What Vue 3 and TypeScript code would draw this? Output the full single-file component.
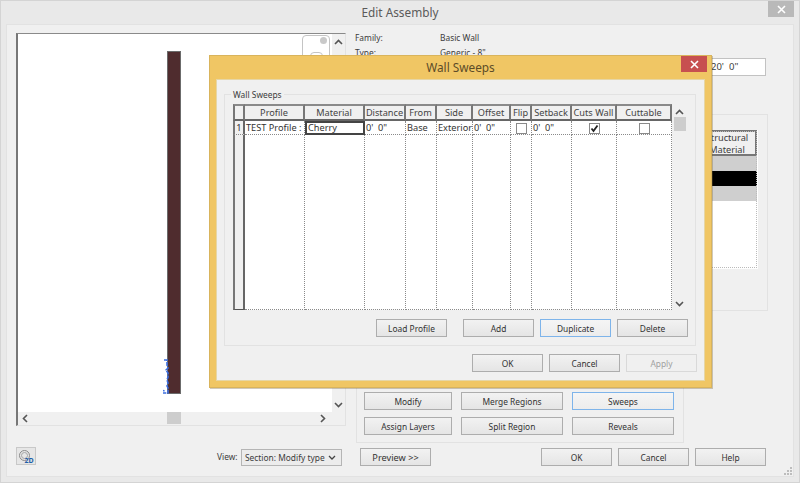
<script setup lang="ts">
interface Col { name: string; width: number; value: string; check?: boolean; checked?: boolean; active?: boolean }
const cols: Col[] = [
  { name: '', width: 12, value: '1' },
  { name: 'Profile', width: 60, value: 'TEST Profile :' },
  { name: 'Material', width: 60, value: 'Cherry', active: true },
  { name: 'Distance', width: 41, value: `0'  0"` },
  { name: 'From', width: 31, value: 'Base' },
  { name: 'Side', width: 36, value: 'Exterior' },
  { name: 'Offset', width: 38, value: `0'  0"` },
  { name: 'Flip', width: 21, value: '', check: true },
  { name: 'Setback', width: 40, value: `0'  0"` },
  { name: 'Cuts Wall', width: 45, value: '', check: true, checked: true },
  { name: 'Cuttable', width: 55, value: '', check: true },
]
</script>

<template>
  <div class="win">
    <header class="title">
      <span>Edit Assembly</span>
      <button class="close grey" type="button">
        <svg width="9" height="9" viewBox="0 0 9 9"><path d="M1 1l7 7M8 1L1 8" stroke="#fff" stroke-width="1.6" /></svg>
      </button>
    </header>

    <div class="body">
      <div class="main">
        <section class="preview">
          <div class="canvas-row">
            <div class="canvas">
              <div class="wall"></div>
              <svg class="tag" width="6" height="36" viewBox="0 0 6 36">
                <path d="M1 1h3v5l1 3-2 2 2 3v4l-1 3 1 3-1 3 1 2v5H0l1-3" fill="none" stroke="#3a6de0" stroke-width="1.6" stroke-dasharray="4 1" />
              </svg>
              <div class="wheel">
                <span class="wheel-x"></span>
                <span class="wheel-in"></span>
              </div>
            </div>
            <div class="vbar">
              <svg width="9" height="6" viewBox="0 0 9 6"><path d="M1 5l3.5-3.5L8 5" fill="none" stroke="#555" stroke-width="1.6" /></svg>
              <svg width="9" height="6" viewBox="0 0 9 6"><path d="M1 1l3.5 3.5L8 1" fill="none" stroke="#555" stroke-width="1.6" /></svg>
            </div>
          </div>
          <div class="hbar">
            <svg width="6" height="9" viewBox="0 0 6 9"><path d="M5 1L1.5 4.5 5 8" fill="none" stroke="#555" stroke-width="1.6" /></svg>
            <span class="hthumb"></span>
            <svg width="6" height="9" viewBox="0 0 6 9"><path d="M1 1l3.5 3.5L1 8" fill="none" stroke="#555" stroke-width="1.6" /></svg>
          </div>
        </section>

        <section class="side">
          <div class="info">
            <dl class="facts">
              <dt>Family:</dt><dd>Basic Wall</dd>
              <dt>Type:</dt><dd>Generic - 8"</dd>
            </dl>
            <div class="sample">20'&nbsp; 0"</div>
          </div>

          <div class="layers">
            <div class="layer-table">
              <div class="layer-head">Structural<br />Material</div>
              <div class="lrow g"></div>
              <div class="lrow k"></div>
              <div class="lrow g"></div>
              <div class="lrow w"></div>
            </div>
          </div>

          <div class="tools">
            <button class="btn" type="button">Modify</button>
            <button class="btn" type="button">Merge Regions</button>
            <button class="btn focus" type="button">Sweeps</button>
            <button class="btn" type="button">Assign Layers</button>
            <button class="btn" type="button">Split Region</button>
            <button class="btn" type="button">Reveals</button>
          </div>
        </section>
      </div>

      <footer class="foot">
        <button class="icon-btn" type="button">
          <svg width="18" height="15" viewBox="0 0 18 15">
            <circle cx="7.5" cy="6.5" r="5" fill="none" stroke="#8a8a8a" stroke-width="1" />
            <circle cx="7.5" cy="6.5" r="3" fill="none" stroke="#a5a5a5" stroke-width="1" />
            <text x="7.5" y="14" class="two-d">2D</text>
          </svg>
        </button>
        <label class="view-label">View:</label>
        <div class="select">
          <span>Section: Modify type</span>
          <svg width="8" height="5" viewBox="0 0 8 5"><path d="M1 1l3 3 3-3" fill="none" stroke="#444" stroke-width="1.3" /></svg>
        </div>
        <button class="btn preview-btn" type="button">Preview &gt;&gt;</button>
        <div class="foot-right">
          <button class="btn" type="button">OK</button>
          <button class="btn" type="button">Cancel</button>
          <button class="btn" type="button">Help</button>
        </div>
      </footer>
      <svg class="grip" width="8" height="8" viewBox="0 0 8 8">
        <path d="M6 0h2v2H6zM3 3h2v2H3zM6 3h2v2H6zM0 6h2v2H0zM3 6h2v2H3zM6 6h2v2H6z" fill="#bdbdbd" />
      </svg>
    </div>

    <div class="modal">
      <header class="m-title">
        <span>Wall Sweeps</span>
        <button class="close red" type="button">
          <svg width="9" height="9" viewBox="0 0 9 9"><path d="M1 1l7 7M8 1L1 8" stroke="#fff" stroke-width="1.6" /></svg>
        </button>
      </header>
      <div class="m-body">
        <div class="group">
          <span class="legend">Wall Sweeps</span>
          <div class="grid-wrap">
            <table class="grid">
              <colgroup>
                <col v-for="c in cols" :key="c.name" :style="{ width: c.width + 'px' }" />
              </colgroup>
              <thead>
                <tr><th v-for="c in cols" :key="c.name">{{ c.name }}</th></tr>
              </thead>
              <tbody>
                <tr class="data">
                  <td v-for="(c, i) in cols" :key="c.name" :class="{ rh: i === 0, active: c.active, mid: c.check }">
                    <span v-if="c.check" class="box">
                      <svg v-if="c.checked" width="9" height="9" viewBox="0 0 9 9"><path d="M1.5 4.5l2 2.5 4-5.5" fill="none" stroke="#222" stroke-width="1.8" /></svg>
                    </span>
                    <template v-else>{{ c.value }}</template>
                  </td>
                </tr>
                <tr class="filler">
                  <td v-for="(c, i) in cols" :key="c.name" :class="{ rh: i === 0 }"></td>
                </tr>
              </tbody>
            </table>
            <div class="m-vbar">
              <svg width="9" height="6" viewBox="0 0 9 6"><path d="M1 5l3.5-3.5L8 5" fill="none" stroke="#555" stroke-width="1.6" /></svg>
              <span class="m-thumb"></span>
              <svg class="down" width="9" height="6" viewBox="0 0 9 6"><path d="M1 1l3.5 3.5L8 1" fill="none" stroke="#555" stroke-width="1.6" /></svg>
            </div>
          </div>
          <div class="g-actions">
            <button class="btn load" type="button">Load Profile</button>
            <button class="btn" type="button">Add</button>
            <button class="btn focus" type="button">Duplicate</button>
            <button class="btn" type="button">Delete</button>
          </div>
        </div>
        <div class="m-actions">
          <button class="btn" type="button">OK</button>
          <button class="btn" type="button">Cancel</button>
          <button class="btn off" type="button" disabled>Apply</button>
        </div>
      </div>
    </div>
  </div>
</template>

<style>
html, body { margin: 0; background: #e9e9e9; overflow: hidden; }
</style>

<style scoped>
* { box-sizing: border-box; }
.win {
  position: relative;
  width: 800px;
  height: 483px;
  display: flex;
  flex-direction: column;
  background: #e9e9e9;
  border: 1px solid #d4d4d4;
  font-family: "Noto Sans", "Open Sans", sans-serif;
  font-size: 8.4px;
  color: #3c3c3c;
}
.title {
  position: relative;
  height: 23px;
  flex: none;
  text-align: center;
  font-size: 11.8px;
  line-height: 23px;
  color: #5a5a5a;
}
.close {
  position: absolute;
  top: 0;
  width: 26px;
  height: 16px;
  border: 0;
  padding: 0;
  display: flex;
  align-items: center;
  justify-content: center;
}
.close.grey { right: 5px; background: #b9b9b9; }
.close.red { right: 4px; background: #c75050; }

.body {
  position: relative;
  flex: 1;
  margin: 0 5px 5px;
  padding: 8px 0 0 9px;
  background: #f0f0f0;
  border: 1px solid #e2e2e2;
}
.main { display: flex; height: 410px; }
.preview {
  width: 330px;
  height: 393px;
  border-left: 2px solid #777;
  border-top: 1px solid #8a8a8a;
  border-right: 1px solid #e2e2e2;
  border-bottom: 1px solid #e2e2e2;
  flex: none;
  display: flex;
  flex-direction: column;
}
.canvas-row { display: flex; height: 378px; }
.canvas { position: relative; width: 314px; background: #fff; }
.wall {
  position: absolute;
  left: 149px;
  top: 17px;
  width: 14px;
  height: 343px;
  background: #4f2c2e;
  border: 1px solid #6b6b6b;
}
.tag { position: absolute; left: 145px; top: 325px; }
.wheel {
  position: absolute;
  left: 284px;
  top: 1px;
  width: 28px;
  height: 41px;
  background: #fff;
  border: 1px solid #c4c4c4;
  border-radius: 4px;
}
.wheel-x {
  position: absolute;
  right: 2px;
  top: 1px;
  width: 7px;
  height: 7px;
  border-radius: 50%;
  background: #c9c9c9;
}
.wheel-in {
  position: absolute;
  left: 7px;
  top: 16px;
  width: 13px;
  height: 20px;
  border: 1px solid #c4c4c4;
  border-radius: 4px;
}
.vbar {
  width: 13px;
  display: flex;
  flex-direction: column;
  justify-content: space-between;
  align-items: center;
  padding: 5px 0 4px;
}
.hbar {
  height: 13px;
  width: 328px;
  display: flex;
  align-items: center;
  justify-content: space-between;
  padding: 0 20px 0 4px;
  position: relative;
}
.hthumb {
  position: absolute;
  left: 149px;
  top: 0;
  width: 14px;
  height: 12px;
  background: #cdcdcd;
}

.side { margin-left: 9px; width: 413px; flex: none; display: flex; flex-direction: column; }
.info { height: 81px; position: relative; }
.facts {
  margin: -3px 0 0;
  display: grid;
  grid-template-columns: 85px 1fr;
  grid-auto-rows: 15px;
  line-height: 15px;
}
.facts dt, .facts dd { margin: 0; }
.sample {
  position: absolute;
  right: 2px;
  top: 25px;
  width: 60px;
  height: 18px;
  background: #fff;
  border: 1px solid #c2c2c2;
  padding-left: 4px;
  line-height: 16px;
  font-size: 9.5px;
}
.layers {
  margin-left: 1px;
  height: 197px;
  border: 1px solid #e2e2e2;
  position: relative;
  display: flex;
  justify-content: flex-end;
  padding: 15px 9px 0 0;
}
.layer-table {
  width: 60px;
  height: 139px;
  border: 1px solid #fff;
  border-top: 0;
  background: #fff;
  display: flex;
  flex-direction: column;
  outline: 1px dotted #bbb;
  outline-offset: -2px;
}
.layer-head {
  height: 26px;
  border: 2px solid #777;
  border-left: 0;
  background: #f0f0f0;
  text-align: center;
  line-height: 12px;
  font-size: 9.2px;
}
.lrow { height: 15px; }
.lrow.g { background: #cfcfcf; }
.lrow.k { background: #000; }
.lrow.w { flex: 1; background: #fff; }
.tools {
  margin: 8px 0 0 1px;
  width: 328px;
  height: 124px;
  border: 1px solid #e2e2e2;
  border-top: 0;
  padding: 73px 9px 0 7px;
  display: grid;
  grid-template-columns: 88px 102px 102px;
  grid-auto-rows: 18px;
  gap: 7px 9px;
}

.btn {
  height: 18px;
  width: 71px;
  padding: 0;
  border: 1px solid #adadad;
  background: linear-gradient(#f2f2f2, #e5e5e5);
  font: inherit;
  font-size: 8.4px;
  color: #333;
  line-height: 15px;
  border-radius: 0;
}
.tools .btn { width: 100%; }
.btn.focus { border-color: #7eb4ea; background: linear-gradient(#f5f5f5, #ececec); }
.btn.off { border-color: #d9d9d9; background: #f0f0f0; color: #a0a0a0; }

.foot { display: flex; align-items: flex-start; margin-top: 4px; }
.icon-btn {
  width: 20px;
  height: 18px;
  padding: 0;
  border: 1px solid #c8c8c8;
  background: #e6e6e6;
  display: flex;
  align-items: center;
  justify-content: center;
}
.two-d { font: 700 7px "Noto Sans", sans-serif; fill: #1f5fa8; }
.view-label { margin: 2px 0 0 181px; width: 24px; line-height: 15px; }
.select {
  margin-top: 2px;
  width: 101px;
  height: 17px;
  border: 1px solid #b5b5b5;
  background: #ececec;
  display: flex;
  align-items: center;
  justify-content: space-between;
  padding: 0 5px 0 3px;
  white-space: nowrap;
}
.preview-btn { margin: 1px 0 0 18px; font-size: 9.2px; }
.foot-right { margin: 1px 0 0 110px; display: flex; gap: 6px; }
.grip { position: absolute; right: 1px; bottom: 1px; }

.modal {
  position: absolute;
  left: 208px;
  top: 54px;
  width: 503px;
  height: 333px;
  background: #f0c664;
  border: 1px solid #d9b45c;
  box-shadow: 1px 1px 0 rgba(120, 100, 60, 0.35);
  display: flex;
  flex-direction: column;
}
.m-title {
  position: relative;
  height: 23px;
  flex: none;
  text-align: center;
  font-size: 11.8px;
  line-height: 23px;
  color: #5c4c28;
}
.m-body {
  flex: 1;
  margin: 0 6px 6px;
  background: #f0f0f0;
  padding: 14px 7px 0 7px;
  border: 1px solid #e6d6a6;
}
.group {
  position: relative;
  height: 252px;
  margin-right: 1px;
  border: 1px solid #e2e2e2;
  padding: 9px 8px 0 8px;
}
.legend {
  position: absolute;
  left: 6px;
  top: -7px;
  padding: 0 2px;
  background: #f0f0f0;
  line-height: 13px;
}
.grid-wrap { display: flex; height: 206px; width: 454px; }
.grid {
  table-layout: fixed;
  border-collapse: separate;
  border-spacing: 0;
  width: 439px;
  height: 206px;
  background: #fff;
  font-size: 9.2px;
}
.grid th {
  height: 17px;
  padding: 0;
  font-weight: 400;
  background: #f0f0f0;
  text-align: center;
  color: #444;
  border-top: 2px solid #8a8a8a;
  border-bottom: 2px solid #666;
  border-right: 2px solid #777;
  white-space: nowrap;
  overflow: hidden;
  line-height: 13px;
}
.grid th:first-child { border-left: 2px solid #777; }
.grid td {
  padding: 0 0 0 1px;
  border-right: 1px dotted #8a8a8a;
  border-bottom: 1px dotted #8a8a8a;
  white-space: pre;
  overflow: hidden;
  color: #333;
  line-height: 12px;
}
.grid .data td { height: 14px; }
.grid td.rh {
  background: #f0f0f0;
  border-left: 2px solid #777;
  border-right: 2px solid #666;
  text-align: center;
  padding: 0;
}
.grid .filler td.rh { border-bottom: 1px solid #555; }
.grid td.active { border: 2px solid #444; line-height: 10px; }
.grid td.mid { text-align: center; padding: 0; }
.box {
  display: inline-flex;
  width: 11px;
  height: 11px;
  border: 1px solid #8a8a8a;
  background: #fff;
  vertical-align: middle;
  align-items: center;
  justify-content: center;
}
.m-vbar {
  width: 15px;
  position: relative;
  display: flex;
  flex-direction: column;
  align-items: center;
  padding-top: 5px;
  background: #f0f0f0;
}
.m-thumb { margin-top: 2px; width: 12px; height: 14px; background: #cdcdcd; }
.down { margin-top: auto; margin-bottom: 3px; }
.g-actions { margin: 9px -1px 0 0; display: flex; justify-content: flex-end; gap: 6px; }
.load { margin-right: 10px; }
.m-actions { margin-top: 8px; display: flex; justify-content: flex-end; gap: 6px; }
</style>
